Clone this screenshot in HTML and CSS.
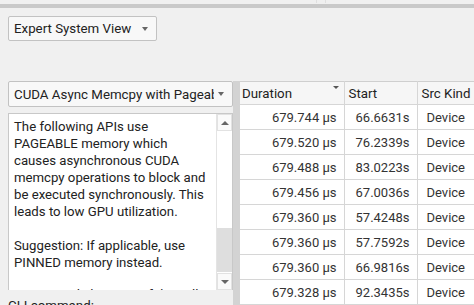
FILE: index.html
```html
<!DOCTYPE html>
<html lang="en">
<head>
<meta charset="UTF-8">
<meta name="viewport" content="width=device-width, initial-scale=1.0">
<title>Expert System View</title>
<link rel="stylesheet" href="styles.css">
</head>
<body>
<!-- Top splitter bar -->
<div class="top-bar"><span class="grip"></span></div>

<div class="toolbar">
    <div class="dropdown view-select">
        <span class="dropdown-text">Expert System View</span>
        <span class="caret"></span>
    </div>
</div>

<div class="main">
    <!-- Left pane: rule picker and description -->
    <div class="left-pane">
        <div class="dropdown rule-select">
            <span class="dropdown-text">CUDA Async Memcpy with Pageable Memory</span>
            <span class="caret"></span>
        </div>
        <div class="desc-box">
            <div class="desc-text">
                <p>The following APIs use PAGEABLE memory which causes asynchronous CUDA memcpy operations to block and be executed synchronously. This leads to low GPU utilization.</p>
                <p class="tight">Suggestion: If applicable, use PINNED memory instead.</p>
                <p>Source code location of the calls:</p>
            </div>
            <div class="scrollbar">
                <div class="scroll-btn"><span class="arrow-up"></span></div>
                <div class="scroll-track"><div class="scroll-thumb"></div></div>
                <div class="scroll-btn"><span class="arrow-down"></span></div>
            </div>
        </div>
        <div class="cli-label">CLI command:</div>
    </div>

    <div class="splitter"></div>

    <!-- Right pane: results table -->
    <div class="table-wrap">
        <table class="results">
            <colgroup>
                <col class="col-duration">
                <col class="col-start">
                <col class="col-kind">
            </colgroup>
            <thead>
                <tr>
                    <th class="sorted">Duration<span class="sort-arrow"></span></th>
                    <th>Start</th>
                    <th>Src Kind</th>
                </tr>
            </thead>
            <tbody>
                <tr><td class="num">679.744 µs</td><td class="num">66.6631s</td><td>Device</td></tr>
                <tr><td class="num">679.520 µs</td><td class="num">76.2339s</td><td>Device</td></tr>
                <tr><td class="num">679.488 µs</td><td class="num">83.0223s</td><td>Device</td></tr>
                <tr><td class="num">679.456 µs</td><td class="num">67.0036s</td><td>Device</td></tr>
                <tr><td class="num">679.360 µs</td><td class="num">57.4248s</td><td>Device</td></tr>
                <tr><td class="num">679.360 µs</td><td class="num">57.7592s</td><td>Device</td></tr>
                <tr><td class="num">679.360 µs</td><td class="num">66.9816s</td><td>Device</td></tr>
                <tr><td class="num">679.328 µs</td><td class="num">92.3435s</td><td>Device</td></tr>
            </tbody>
        </table>
    </div>
</div>
</body>
</html>
```

FILE: styles.css
```css
/* Basic page styling */
body {
    margin: 0;
    background-color: #f0f0f0;
    font-family: Roboto, "Liberation Sans", sans-serif;
    font-size: 13px;
    color: #222;
    width: 474px;
    height: 305px;
    overflow: hidden;
}
/* Top splitter */
.top-bar {
    margin-top: 4px;
    height: 4px;
    background-color: #c9c9c9;
    position: relative;
}
.grip {
    position: absolute;
    left: 316px;
    top: -4px;
    width: 8px;
    height: 3px;
    border-left: 1px solid #e0e0e0;
    border-right: 1px solid #e0e0e0;
}
.toolbar {
    padding: 8px 8px 0 8px;
    height: 65px;
}
/* Drop-down boxes */
.dropdown {
    display: flex;
    align-items: center;
    height: 23px;
    background-color: #f8f8f8;
    border: 1px solid #c2c2c2;
    border-radius: 2px;
    padding: 0 8px 0 5px;
    box-sizing: content-box;
    font-size: 13.3px;
}
.dropdown-text {
    flex: 1;
    white-space: nowrap;
    overflow: hidden;
}
.view-select {
    width: 134px;
}
.caret {
    width: 0;
    height: 0;
    margin-left: 6px;
    border-left: 3.5px solid transparent;
    border-right: 3.5px solid transparent;
    border-top: 4px solid #666;
}
/* Main area */
.main {
    display: flex;
}
.left-pane {
    width: 225px;
    padding-left: 8px;
    display: flex;
    flex-direction: column;
}
.rule-select {
    width: 210px;
    height: 24px;
}
.rule-select .caret {
    margin-left: 4px;
}
.desc-box {
    margin-top: 6px;
    height: 176px;
    display: flex;
    background-color: #fff;
    border: 1px solid #c8c8c8;
    border-bottom: none;
    overflow: hidden;
}
.desc-text {
    flex: 1;
    padding: 4px 4px 0 5px;
    line-height: 17px;
    font-size: 13.2px;
    overflow: hidden;
}
.desc-text p {
    margin: 0 0 17px 0;
}
.desc-text p.tight {
    margin-bottom: 15px;
}
/* Fake scrollbar */
.scrollbar {
    width: 15px;
    display: flex;
    flex-direction: column;
    border-left: 1px solid #e4e4e4;
}
.scroll-btn {
    height: 15px;
    display: flex;
    align-items: center;
    justify-content: center;
    border: 1px solid #e2e2e2;
    background-color: #fafafa;
}
.scroll-track {
    flex: 1;
    display: flex;
    flex-direction: column;
    justify-content: flex-end;
    padding-bottom: 1px;
}
.scroll-thumb {
    height: 44px;
    background-color: #dedede;
}
.arrow-up, .arrow-down {
    width: 0;
    height: 0;
    border-left: 4px solid transparent;
    border-right: 4px solid transparent;
}
.arrow-up {
    border-bottom: 4px solid #666;
}
.arrow-down {
    border-top: 4px solid #666;
}
.cli-label {
    margin-top: 7px;
    line-height: 17px;
    font-size: 13.3px;
}
.splitter {
    width: 7px;
    height: 230px;
    background-color: #d3d3d3;
}
/* Results table */
.table-wrap {
    flex: 1;
    overflow: hidden;
    background-color: #f0f0f0;
}
.results {
    table-layout: fixed;
    width: 260px;
    border-collapse: collapse;
    background-color: #fff;
}
.col-duration {
    width: 104px;
}
.col-start {
    width: 73px;
}
.col-kind {
    width: 83px;
}
th {
    height: 22px;
    padding: 0 4px;
    text-align: left;
    font-weight: normal;
    font-size: 13.3px;
    background-color: #f6f6f6;
    border-top: 1px solid #cfcfcf;
    border-right: 1px solid #d6d6d6;
    border-bottom: 1px solid #d6d6d6;
    color: #222;
    white-space: nowrap;
}
th.sorted {
    position: relative;
    padding-left: 2px;
}
.sort-arrow {
    position: absolute;
    right: 5px;
    top: 4px;
    border-left: 3px solid transparent;
    border-right: 3px solid transparent;
    border-top: 3px solid #555;
}
td {
    height: 24px;
    padding: 0 9px;
    border-right: 1px solid #d6d6d6;
    border-bottom: 1px solid #d6d6d6;
    color: #333;
    white-space: nowrap;
}
td.num {
    text-align: right;
    padding-right: 7px;
}
```
